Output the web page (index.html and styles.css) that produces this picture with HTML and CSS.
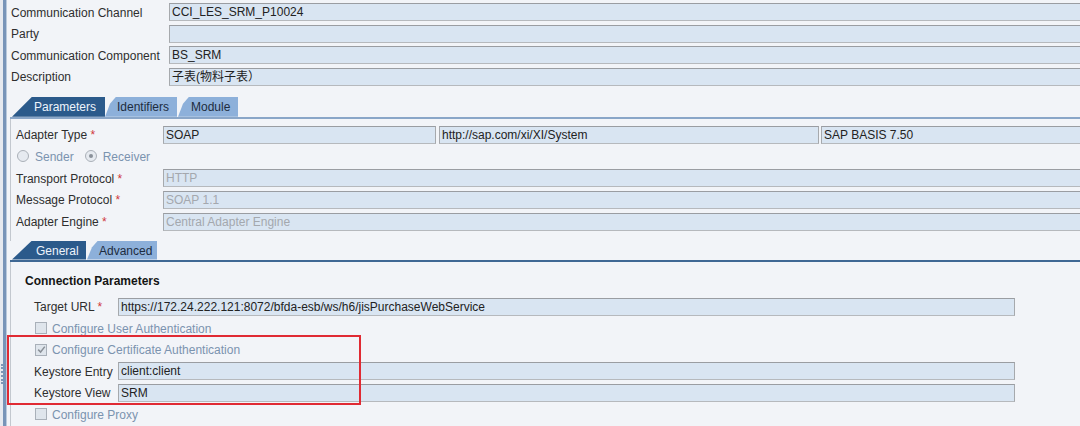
FILE: index.html
```html
<!DOCTYPE html>
<html>
<head>
<meta charset="utf-8">
<link rel="stylesheet" href="styles.css">
</head>
<body>
<div class="app">
  <div class="rail"><span class="grip"></span></div>
  <div class="main">
    <div class="hdr">
      <div class="row"><span class="lbl">Communication Channel</span><span class="inp">CCI_LES_SRM_P10024</span></div>
      <div class="row"><span class="lbl">Party</span><span class="inp"></span></div>
      <div class="row"><span class="lbl">Communication Component</span><span class="inp">BS_SRM</span></div>
      <div class="row"><span class="lbl">Description</span><span class="inp">子表(物料子表）</span></div>
    </div>

    <div class="tabs tabs-outer">
      <span class="tab active first t-param">Parameters</span>
      <span class="tab t-ident">Identifiers</span>
      <span class="tab t-mod">Module</span>
    </div>

    <div class="panel p1">
      <div class="row"><span class="lbl">Adapter Type <i>*</i></span><span class="inp w-soap">SOAP</span><span class="inp w-ns">http://sap.com/xi/XI/System</span><span class="inp grow">SAP BASIS 7.50</span></div>
      <div class="row radios"><span class="radio"></span><span class="dis r-send">Sender</span><span class="radio on"></span><span class="dis">Receiver</span></div>
      <div class="row"><span class="lbl">Transport Protocol <i>*</i></span><span class="inp grow off">HTTP</span></div>
      <div class="row"><span class="lbl">Message Protocol <i>*</i></span><span class="inp grow off">SOAP 1.1</span></div>
      <div class="row"><span class="lbl">Adapter Engine <i>*</i></span><span class="inp grow off">Central Adapter Engine</span></div>
    </div>

    <div class="tabs tabs-inner">
      <span class="tab active first t-gen">General</span>
      <span class="tab t-adv">Advanced</span>
    </div>

    <div class="panel p2">
      <div class="sect">Connection Parameters</div>
      <div class="rows">
        <div class="row"><span class="lbl">Target URL <i>*</i></span><span class="inp wide">https://172.24.222.121:8072/bfda-esb/ws/h6/jisPurchaseWebService</span></div>
        <div class="row chk"><span class="box"></span><span class="dis">Configure User Authentication</span></div>
        <div class="row chk"><span class="box on"><svg width="9" height="9" viewBox="0 0 9 9"><path d="M1.2 4.6 L3.6 7 L7.8 1.6" fill="none" stroke="#8a9098" stroke-width="1.5"/></svg></span><span class="dis">Configure Certificate Authentication</span></div>
        <div class="row"><span class="lbl">Keystore Entry</span><span class="inp wide">client:client</span></div>
        <div class="row"><span class="lbl">Keystore View</span><span class="inp wide">SRM</span></div>
        <div class="row chk"><span class="box"></span><span class="dis">Configure Proxy</span></div>
      </div>
      <div class="mark"></div>
    </div>
  </div>
</div>
</body>
</html>
```

FILE: styles.css
```css
html, body {
  margin: 0;
  padding: 0;
  background: #f2f4f8;
  overflow: hidden;
}
body {
  font-family: "Liberation Sans", Arial, "Noto Sans CJK SC", sans-serif;
  font-size: 12px;
  color: #333;
  width: 1080px;
  height: 426px;
}
.app {
  display: flex;
  height: 426px;
}
.rail {
  width: 7px;
  flex: none;
  background: linear-gradient(to right, #e6e9ef 0, #e6e9ef 3px, #7894b8 3px, #7894b8 6px, #b9c9dc 6px);
  display: flex;
  flex-direction: column;
}
.grip {
  display: block;
  margin-top: 364px;
  width: 2px;
  height: 20px;
  margin-left: 1px;
  border-left: 2px dotted #7f97b6;
}
.main {
  flex: none;
  width: 1090px;
  padding-left: 3px;
  display: flex;
  flex-direction: column;
}
.row {
  display: flex;
  align-items: center;
  height: 18px;
  line-height: 18px;
}
.lbl {
  flex: none;
  color: #2e2e2e;
  white-space: nowrap;
  padding-top: 1px;
}
.lbl i {
  font-style: normal;
  color: #d0383c;
}
.inp {
  box-sizing: border-box;
  height: 18px;
  line-height: 17px;
  background: #d9e5f2;
  border: 1px solid #a6a9ad;
  border-top-color: #9a9da2;
  border-bottom-color: #b6b9bd;
  padding-left: 2px;
  color: #222;
  white-space: nowrap;
  overflow: hidden;
}
.inp.off { color: #a4a8ae; }
.grow { flex: 1; }

/* header */
.hdr {
  padding-left: 1px;
  padding-top: 3px;
  display: flex;
  flex-direction: column;
  gap: 3.6px;
}
.hdr .lbl { width: 158px; }
.hdr .inp { flex: 1; }

/* tabs */
.tabs {
  display: flex;
  height: 20px;
  padding-left: 2px;
}
.tabs-outer {
  margin-top: 11px;
  border-bottom: 2px solid #8aa6c8;
}
.tabs-inner {
  border-bottom: 2px solid #3f6894;
  height: 19px;
}
.tab {
  display: flex;
  align-items: center;
  box-sizing: border-box;
  height: 100%;
  padding-top: 1px;
  color: #1d2c40;
  background: #8db0da;
  clip-path: polygon(0 100%, 5px 35%, 11px 0, 100% 0, 100% 100%);
  white-space: nowrap;
}
.tab.active {
  background: #2b5a8b;
  color: #eef4fb;
  clip-path: polygon(0 100%, 20px 0, 100% 0, 100% 100%);
}
.t-param { width: 93px; padding-left: 22px; }
.t-ident { width: 72px; padding-left: 12px; }
.t-mod { width: 60px; padding-left: 13px; margin-left: 1px; }
.t-gen { width: 74px; padding-left: 24px; }
.t-adv { width: 70px; padding-left: 12px; margin-left: 1px; }

/* panels */
.panel {
  border-left: 1px solid #c3c8cf;
  position: relative;
}
.p1 {
  padding: 7px 0 10px 5px;
  display: flex;
  flex-direction: column;
  gap: 3.7px;
}
.p1 .lbl { width: 147px; }
.w-soap { width: 273px; flex: none; }
.w-ns { width: 380px; flex: none; margin-left: 3px; }
.p1 .grow:last-child { margin-left: 2px; }
.p1 .row .lbl + .grow { margin-left: 0; }
.radio {
  box-sizing: border-box;
  width: 12px;
  height: 12px;
  border-radius: 50%;
  border: 1px solid #aab0b8;
  background: #e6eaf0;
  margin-right: 6px;
  margin-left: 1px;
  display: flex;
  align-items: center;
  justify-content: center;
}
.radio.on::after {
  content: "";
  width: 4px;
  height: 4px;
  border-radius: 50%;
  background: #8a9099;
}
.r-send { margin-right: 10px; }
.dis { color: #7b93af; padding-top: 1px; }

.p2 {
  padding: 12px 0 0 14px;
  flex: 1;
}
.sect {
  font-weight: bold;
  color: #141414;
  height: 14px;
  line-height: 14px;
}
.rows {
  margin-top: 10px;
  padding-left: 9px;
  display: flex;
  flex-direction: column;
  gap: 3.5px;
}
.p2 .lbl { width: 84px; }
.wide { width: 897px; flex: none; }
.chk .box {
  box-sizing: border-box;
  width: 12px;
  height: 12px;
  border: 1px solid #a9b0b9;
  background: #dfe5ec;
  margin-left: 1px;
  margin-right: 5px;
  display: flex;
  align-items: center;
  justify-content: center;
}
.mark {
  position: absolute;
  left: -4px;
  top: 73px;
  width: 350px;
  height: 66px;
  border: 2px solid #e02a33;
}
```
